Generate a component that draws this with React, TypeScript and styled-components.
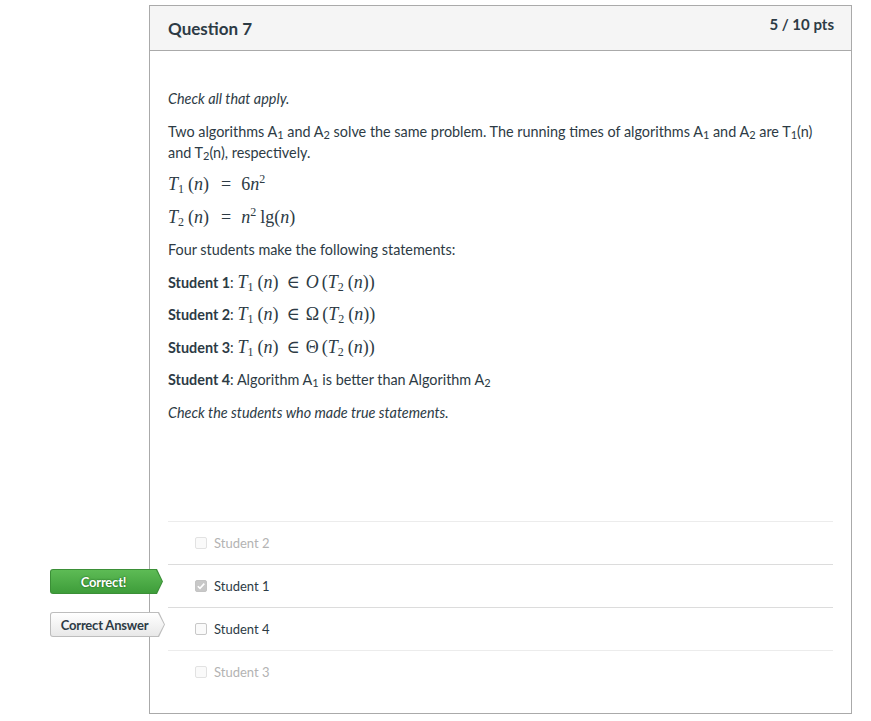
import styled, { createGlobalStyle } from 'styled-components'

const GlobalStyle = createGlobalStyle`
    body {
        margin: 0;
        background: #fff;
        font-family: Lato, "Open Sans", Arial, sans-serif;
        color: #2d3b45;
    }
`

type Answer = {
    label: string
    chosen?: boolean
    correct?: boolean
}

const answers: Answer[] = [
    { label: 'Student 2' },
    { label: 'Student 1', chosen: true, correct: true },
    { label: 'Student 4', correct: true },
    { label: 'Student 3' },
]

const T = ({ i }: { i: number }) => (
    <>
        <V>T</V>
        <MSub>{i}</MSub>
        <Gap $w={4} />
        (<V>n</V>)
    </>
)

const App = () => {
    return (
        <Page>
            <GlobalStyle />
            <Card>
                <Header>
                    <Title>Question 7</Title>
                    <Points>5 / 10 pts</Points>
                </Header>
                <Body>
                    <Para>
                        <em>Check all that apply.</em>
                    </Para>
                    <Para>
                        Two algorithms A<Sub>1</Sub> and A<Sub>2</Sub> solve the same problem. The
                        running times of algorithms A<Sub>1</Sub> and A<Sub>2</Sub> are T<Sub>1</Sub>(n)
                        and T<Sub>2</Sub>(n), respectively.
                    </Para>
                    <Para>
                        <Math>
                            <T i={1} />
                            <Op>=</Op>6<V>n</V>
                            <MSup>2</MSup>
                        </Math>
                    </Para>
                    <Para>
                        <Math>
                            <T i={2} />
                            <Op>=</Op>
                            <V>n</V>
                            <MSup>2</MSup>
                            <Gap $w={4} />
                            lg(<V>n</V>)
                        </Math>
                    </Para>
                    <Para>Four students make the following statements:</Para>
                    <Para>
                        <strong>Student 1</strong>:{' '}
                        <Math>
                            <T i={1} />
                            <Rel>∈</Rel>
                            <V>O</V>
                            <Gap $w={3} />(<T i={2} />)
                        </Math>
                    </Para>
                    <Para>
                        <strong>Student 2</strong>:{' '}
                        <Math>
                            <T i={1} />
                            <Rel>∈</Rel>Ω<Gap $w={3} />(<T i={2} />)
                        </Math>
                    </Para>
                    <Para>
                        <strong>Student 3</strong>:{' '}
                        <Math>
                            <T i={1} />
                            <Rel>∈</Rel>Θ<Gap $w={3} />(<T i={2} />)
                        </Math>
                    </Para>
                    <Para>
                        <strong>Student 4</strong>: Algorithm A<Sub>1</Sub> is better than Algorithm A
                        <Sub>2</Sub>
                    </Para>
                    <Para>
                        <em>Check the students who made true statements.</em>
                    </Para>

                    <AnswerList>
                        {answers.map((a) => (
                            <AnswerRow key={a.label} $strong={!!(a.chosen || a.correct)}>
                                {a.chosen && a.correct && (
                                    <Flag $tone='correct'>
                                        <FlagFace $tone='correct'>Correct!</FlagFace>
                                    </Flag>
                                )}
                                {!a.chosen && a.correct && (
                                    <Flag $tone='answer'>
                                        <FlagFace $tone='answer'>Correct Answer</FlagFace>
                                    </Flag>
                                )}
                                <Box $checked={!!a.chosen} $muted={!a.chosen && !a.correct}>
                                    {a.chosen && (
                                        <svg width='10' height='10' viewBox='0 0 10 10'>
                                            <path
                                                d='M1.8 5.2 L4 7.4 L8.3 2.6'
                                                fill='none'
                                                stroke='#fff'
                                                strokeWidth='1.6'
                                            />
                                        </svg>
                                    )}
                                </Box>
                                <AnswerText $muted={!a.chosen && !a.correct}>{a.label}</AnswerText>
                            </AnswerRow>
                        ))}
                    </AnswerList>
                </Body>
            </Card>
        </Page>
    )
}

export default App

const Page = styled.div`
    padding: 5px 0 0 149px;
`

const Card = styled.div`
    box-sizing: border-box;
    width: 703px;
    border: 1px solid #aaaaaa;
    background: #fff;
`

const Header = styled.div`
    display: flex;
    justify-content: space-between;
    align-items: flex-start;
    height: 44px;
    padding: 0 17px 0 18px;
    background: #f5f5f5;
    border-bottom: 1px solid #aaaaaa;
`

const Title = styled.h2`
    margin: 12px 0 0;
    font-size: 17px;
    line-height: 22px;
    font-weight: 700;
    color: #2d3b45;
`

const Points = styled.div`
    margin-top: 8px;
    font-size: 15px;
    line-height: 20px;
    font-weight: 700;
    color: #2d3b45;
`

const Body = styled.div`
    padding: 37px 18px 20px;
`

const Para = styled.p`
    margin: 0 0 11.5px;
    font-size: 14.4px;
    line-height: 21px;

    strong {
        font-weight: 700;
    }
`

const Sub = styled.sub`
    font-size: 11px;
    line-height: 0;
    vertical-align: -2px;
`

const Math = styled.span`
    font-family: "Liberation Serif", "DejaVu Serif", serif;
    font-size: 18px;
    white-space: nowrap;
`

const V = styled.i`
    font-style: italic;
`

const MSub = styled.sub`
    font-size: 12px;
    line-height: 0;
    vertical-align: -3px;
`

const MSup = styled.sup`
    font-size: 12px;
    line-height: 0;
    vertical-align: 7px;
`

const Gap = styled.span<{ $w: number }>`
    display: inline-block;
    width: ${(p) => p.$w}px;
`

const Op = styled.span`
    margin: 0 10px 0 12px;
`

const Rel = styled.span`
    margin: 0 6px 0 8px;
`

const AnswerList = styled.div`
    margin-top: 98.5px;
`

const AnswerRow = styled.div<{ $strong: boolean }>`
    position: relative;
    display: flex;
    align-items: center;
    gap: 7px;
    height: 42px;
    padding-left: 27px;
    border-top: 1px solid ${(p) => (p.$strong ? '#dcdcdc' : '#ececec')};
`

const Flag = styled.div<{ $tone: 'correct' | 'answer' }>`
    position: absolute;
    left: -118px;
    top: 4px;
    box-sizing: border-box;
    width: ${(p) => (p.$tone === 'correct' ? '113px' : '115px')};
    height: 25px;
    padding: 1px;
    border-radius: 3px;
    background: ${(p) => (p.$tone === 'correct' ? '#3b8f37' : '#bdbdbd')};
    clip-path: polygon(0 0, calc(100% - 6px) 0, 100% 50%, calc(100% - 6px) 100%, 0 100%);
`

const FlagFace = styled.div<{ $tone: 'correct' | 'answer' }>`
    display: flex;
    align-items: center;
    justify-content: center;
    height: 100%;
    padding-right: 6px;
    border-radius: 2px;
    font-size: 13px;
    font-weight: 700;
    letter-spacing: -0.2px;
    background: ${(p) =>
        p.$tone === 'correct'
            ? 'linear-gradient(#5dbb55, #3e9d3a)'
            : 'linear-gradient(#ffffff, #e8e8e8)'};
    color: ${(p) => (p.$tone === 'correct' ? '#fff' : '#2d3b45')};
    text-shadow: ${(p) => (p.$tone === 'correct' ? '0 0 2px rgba(0, 60, 0, 0.8)' : 'none')};
    clip-path: polygon(0 0, calc(100% - 6px) 0, 100% 50%, calc(100% - 6px) 100%, 0 100%);
`

const Box = styled.span<{ $checked: boolean; $muted: boolean }>`
    display: inline-flex;
    align-items: center;
    justify-content: center;
    box-sizing: border-box;
    width: 12px;
    height: 12px;
    border-radius: 2px;
    border: 1px solid ${(p) => (p.$checked ? '#c4c4c4' : p.$muted ? '#e2e2e2' : '#c8c8c8')};
    background: ${(p) => (p.$checked ? '#c8c8c8' : '#fafafa')};
`

const AnswerText = styled.span<{ $muted: boolean }>`
    font-size: 13px;
    color: ${(p) => (p.$muted ? '#b3b3b3' : '#2d3b45')};
`
